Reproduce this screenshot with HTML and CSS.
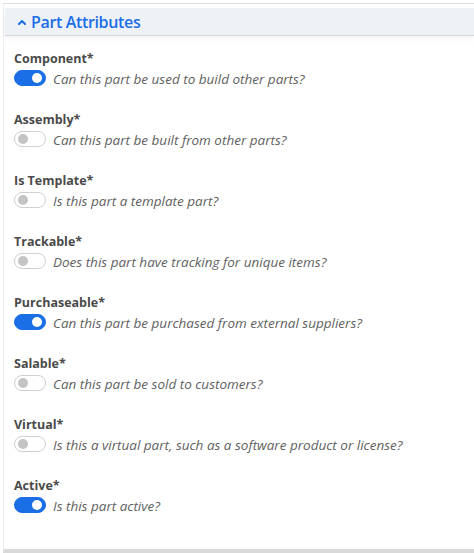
FILE: index.html
```html
<!DOCTYPE html>
<html>
<head>
<meta charset="utf-8">
<link rel="stylesheet" href="styles.css">
</head>
<body>
<div class="panel">
  <div class="panel-heading">
    <svg class="chev" width="8" height="6" viewBox="0 0 8 6"><path d="M1 5 L4 2 L7 5" fill="none" stroke="#1a6ee6" stroke-width="2" stroke-linecap="round" stroke-linejoin="round"/></svg>
    <span class="title">Part Attributes</span>
  </div>
  <div class="panel-body">
    <div class="field">
      <div class="label">Component*</div>
      <div class="control"><span class="switch on"></span><span class="help">Can this part be used to build other parts?</span></div>
    </div>
    <div class="field">
      <div class="label">Assembly*</div>
      <div class="control"><span class="switch"></span><span class="help">Can this part be built from other parts?</span></div>
    </div>
    <div class="field">
      <div class="label">Is Template*</div>
      <div class="control"><span class="switch"></span><span class="help">Is this part a template part?</span></div>
    </div>
    <div class="field">
      <div class="label">Trackable*</div>
      <div class="control"><span class="switch"></span><span class="help">Does this part have tracking for unique items?</span></div>
    </div>
    <div class="field">
      <div class="label">Purchaseable*</div>
      <div class="control"><span class="switch on"></span><span class="help">Can this part be purchased from external suppliers?</span></div>
    </div>
    <div class="field">
      <div class="label">Salable*</div>
      <div class="control"><span class="switch"></span><span class="help">Can this part be sold to customers?</span></div>
    </div>
    <div class="field">
      <div class="label">Virtual*</div>
      <div class="control"><span class="switch"></span><span class="help">Is this a virtual part, such as a software product or license?</span></div>
    </div>
    <div class="field">
      <div class="label">Active*</div>
      <div class="control"><span class="switch on"></span><span class="help">Is this part active?</span></div>
    </div>
  </div>
</div>
</body>
</html>
```
FILE: styles.css
```css
html, body {
  margin: 0;
  padding: 0;
  background: #ffffff;
}
body {
  font-family: "Open Sans", "Noto Sans", sans-serif;
  overflow: hidden;
}
.panel {
  margin: 3px 0 0 3px;
  border-top: 1px solid #dcdcdc;
  border-left: 1px solid #ececec;
  border-bottom: 4px solid #d9d9d9;
  height: 550px;
  box-sizing: border-box;
  padding-top: 4px;
}
.panel-heading {
  margin-left: 1px;
  height: 27px;
  background: #eef2f6;
  border-bottom: 1px solid #d3d9e0;
  box-shadow: 0 2px 6px rgba(0,0,0,0.05);
  display: flex;
  align-items: center;
  padding-left: 13px;
  gap: 5px;
}
.chev {
  display: block;
  margin-top: 1px;
}
.title {
  color: #1a6ee6;
  font-size: 16px;
  font-weight: 600;
  letter-spacing: -0.35px;
}
.panel-body {
  padding: 14px 0 0 10px;
}
.field {
  margin-bottom: 23px;
}
.label {
  font-size: 12.5px;
  font-weight: 700;
  color: #4a4a4a;
  line-height: 18px;
  height: 18px;
}
.control {
  display: flex;
  align-items: center;
  height: 20px;
  gap: 7px;
}
.switch {
  position: relative;
  width: 32px;
  height: 16px;
  border-radius: 8px;
  border: 1px solid #cfcfcf;
  background: #fff;
  box-sizing: border-box;
  flex: none;
}
.switch::after {
  content: "";
  position: absolute;
  top: 2px;
  left: 3px;
  width: 10px;
  height: 10px;
  border-radius: 50%;
  background: #c4c4c4;
}
.switch.on {
  background: #1a6ee6;
  border-color: #1a6ee6;
}
.switch.on::after {
  left: auto;
  right: 3px;
  background: #fff;
}
.help {
  font-size: 13.5px;
  font-style: italic;
  color: #5f5f5f;
  padding-top: 2px;
}
```
